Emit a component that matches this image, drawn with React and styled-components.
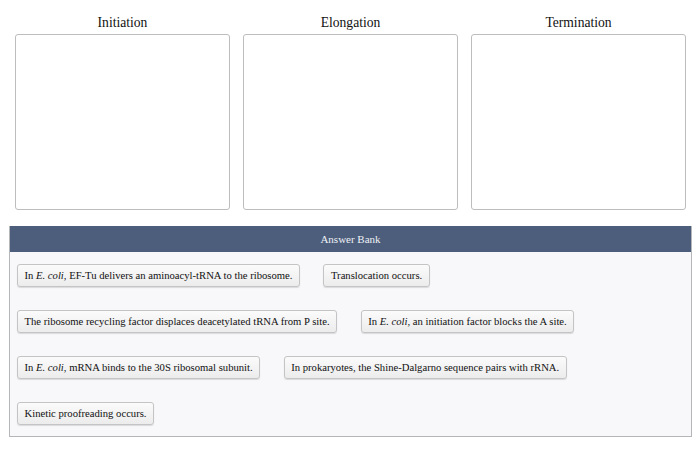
import React from 'react';
import styled, { createGlobalStyle } from 'styled-components';

const GlobalStyle = createGlobalStyle`
  html, body {
    margin: 0;
    padding: 0;
    background: #ffffff;
  }
  body {
    font-family: "Liberation Serif", "Times New Roman", serif;
    color: #111;
  }
`;

const columns = ['Initiation', 'Elongation', 'Termination'];

const rows = [
  [
    <>In <i>E. coli</i>, EF-Tu delivers an aminoacyl-tRNA to the ribosome.</>,
    <>Translocation occurs.</>,
  ],
  [
    <>The ribosome recycling factor displaces deacetylated tRNA from P site.</>,
    <>In <i>E. coli</i>, an initiation factor blocks the A site.</>,
  ],
  [
    <>In <i>E. coli</i>, mRNA binds to the 30S ribosomal subunit.</>,
    <>In prokaryotes, the Shine-Dalgarno sequence pairs with rRNA.</>,
  ],
  [<>Kinetic proofreading occurs.</>],
];

export default function App() {
  return (
    <Page>
      <GlobalStyle />
      <Bins>
        {columns.map((name) => (
          <Bin key={name}>
            <BinTitle>{name}</BinTitle>
            <DropZone />
          </Bin>
        ))}
      </Bins>

      {/* Answer Bank */}
      <Bank>
        <BankHeader>Answer Bank</BankHeader>
        <BankBody>
          {rows.map((row, i) => (
            <ChipRow key={i}>
              {row.map((text, j) => (
                <Chip key={j}>
                  <span>{text}</span>
                </Chip>
              ))}
            </ChipRow>
          ))}
        </BankBody>
      </Bank>
    </Page>
  );
}

const Page = styled.div`
  width: 700px;
  height: 451px;
  box-sizing: border-box;
  padding-top: 15px;
`;

// Drop target columns
const Bins = styled.div`
  display: grid;
  grid-template-columns: repeat(3, 215px);
  column-gap: 13px;
  padding-left: 15px;
`;

const Bin = styled.div`
  display: flex;
  flex-direction: column;
`;

const BinTitle = styled.div`
  text-align: center;
  font-size: 13.6px;
  line-height: 16px;
  height: 19px;
  color: #111;
`;

const DropZone = styled.div`
  height: 176px;
  box-sizing: border-box;
  border: 1.5px solid #bdbdbd;
  border-radius: 3px;
  background: #fff;
`;

// Answer bank panel
const Bank = styled.div`
  margin: 16px 0 0 9px;
  width: 683px;
  box-sizing: border-box;
  border: 1px solid #b4b6ba;
  border-top: none;
  background: #f8f8fb;
`;

const BankHeader = styled.div`
  height: 26px;
  background: #4c5e7c;
  color: #eef0f5;
  font-size: 11px;
  line-height: 26px;
  text-align: center;
`;

const BankBody = styled.div`
  display: flex;
  flex-direction: column;
  gap: 23px;
  padding: 12px 7px 11px;
`;

const ChipRow = styled.div`
  display: flex;
  gap: 23.5px;
`;

const Chip = styled.div`
  height: 23px;
  box-sizing: border-box;
  padding: 0 6.5px;
  display: flex;
  align-items: center;
  white-space: nowrap;
  font-size: 10.65px;
  color: #111;
  border: 1px solid #c4c4c4;
  border-radius: 3px;
  background: linear-gradient(#fbfbfb, #ececec);
  box-shadow: 0 1px 1px rgba(0, 0, 0, 0.12);
`;
